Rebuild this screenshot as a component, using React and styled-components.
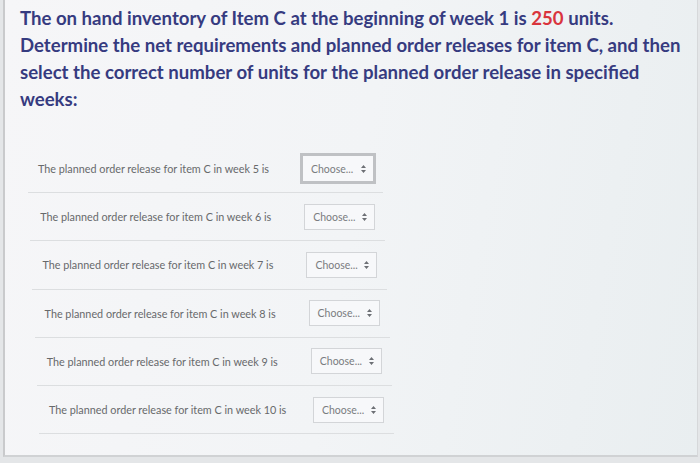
import React from "react";
import styled, { createGlobalStyle } from "styled-components";

const Global = createGlobalStyle`
  html, body { margin: 0; padding: 0; }
  body {
    width: 700px;
    height: 463px;
    overflow: hidden;
    background: #e4e6e8;
    font-family: "Lato", "Open Sans", sans-serif;
  }
`;

const Card = styled.div`
  box-sizing: border-box;
  margin-left: 3px;
  width: 695px;
  height: 457px;
  border-left: 2px solid #c9cacc;
  border-right: 1px solid #d6d8da;
  border-bottom: 2px solid #d0d2d4;
  background: linear-gradient(100deg, #f6f6f8 0%, #f2f4f6 50%, #e9eef0 100%);
  padding: 5px 0 0 15px;
`;

const Title = styled.p`
  margin: 0;
  font-family: "Lato", sans-serif;
  font-weight: 700;
  font-size: 18.6px;
  line-height: 27px;
  color: #363b80;
  white-space: nowrap;
`;

const Red = styled.span`
  color: #d9343d;
`;

const List = styled.div`
  margin-top: 32px;
  display: flex;
  flex-direction: column;
`;

const Row = styled.div`
  box-sizing: border-box;
  height: 48.2px;
  width: 355px;
  margin-left: ${(p) => 8 + p.$i * 2.2}px;
  display: flex;
  align-items: center;
  justify-content: space-between;
  border-bottom: 1px solid #dcdee0;
  padding-left: 10px;
`;

const Label = styled.span`
  font-family: "Lato", sans-serif;
  font-size: 10.8px;
  color: #67696b;
`;

const Select = styled.div`
  box-sizing: border-box;
  width: ${(p) => (p.$focus ? 76 : 71)}px;
  height: ${(p) => (p.$focus ? 31 : 26)}px;
  margin-right: ${(p) => (p.$focus ? 7 : 10)}px;
  border: ${(p) => (p.$focus ? "3px solid #bfc1c4" : "1px solid #d3d5d8")};
  background: #f7f8fa;
  display: flex;
  align-items: center;
  justify-content: space-between;
  padding: 0 7px 0 8px;
  font-family: "Lato", sans-serif;
  font-size: 10.5px;
  color: #7a7c80;
`;

const Arrows = styled.svg`
  width: 5px;
  height: 8px;
  fill: #6d7075;
`;

const weeks = [5, 6, 7, 8, 9, 10];

export default function App() {
  return (
    <>
      <Global />
      <Card>
        <Title>
          The on hand inventory of Item C at the beginning of week 1 is <Red>250</Red> units.
          <br />
          Determine the net requirements and planned order releases for item C, and then
          <br />
          select the correct number of units for the planned order release in specified
          <br />
          weeks:
        </Title>
        <List>
          {weeks.map((w, i) => (
            <Row key={w} $i={i}>
              <Label>The planned order release for item C in week {w} is</Label>
              <Select $focus={i === 0}>
                <span>Choose...</span>
                <Arrows viewBox="0 0 5 8">
                  <path d="M2.5 0 L5 3 H0 Z M0 5 H5 L2.5 8 Z" />
                </Arrows>
              </Select>
            </Row>
          ))}
        </List>
      </Card>
    </>
  );
}
